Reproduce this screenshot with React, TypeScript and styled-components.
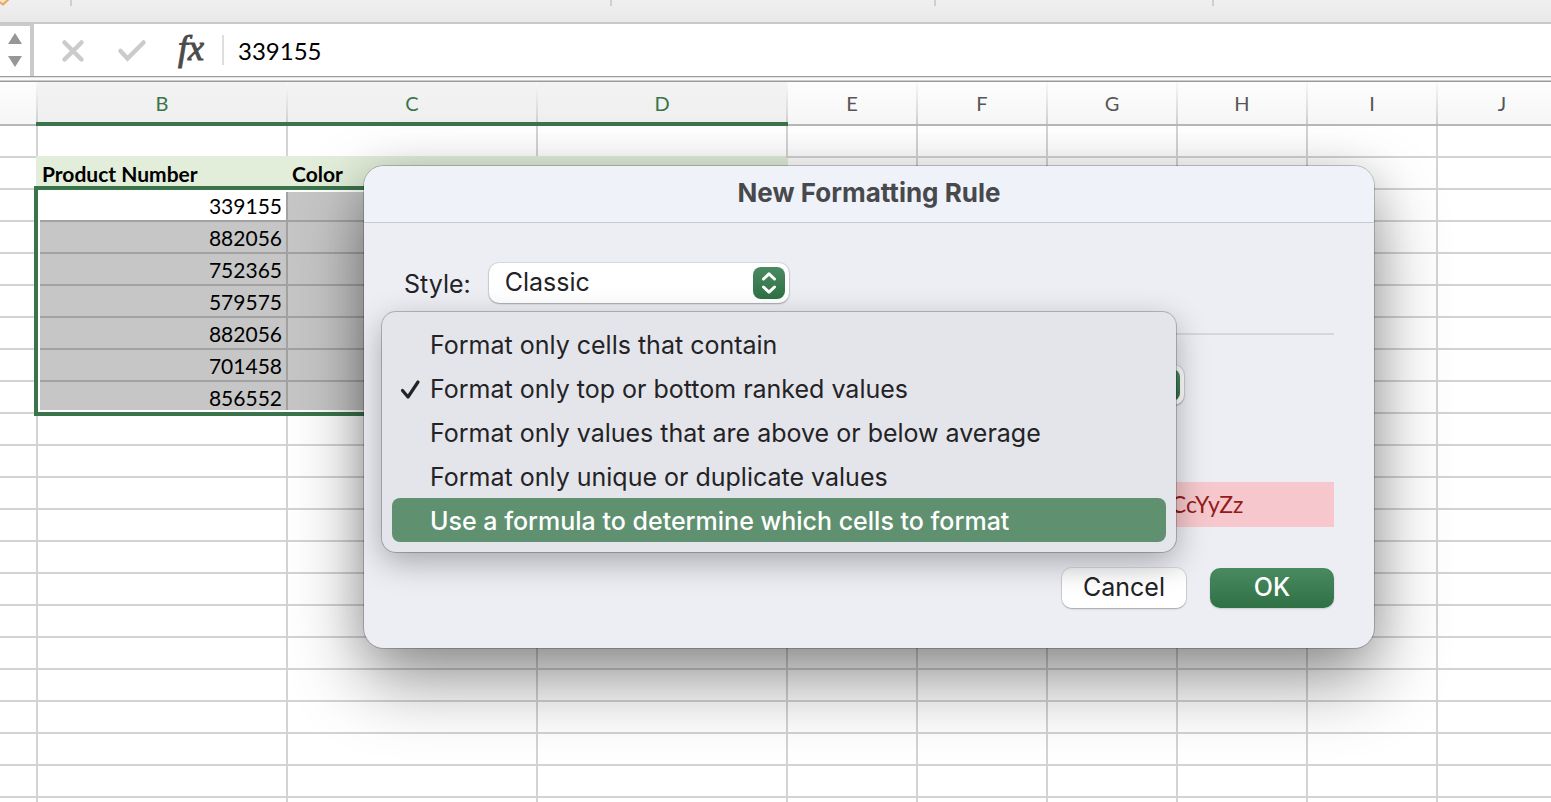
import React from "react";
import styled, { createGlobalStyle, css } from "styled-components";

const GREEN = "#39744a";
const SHEET_FONT = `Lato, "Liberation Sans", sans-serif`;
const UI_FONT = `Inter, "Liberation Sans", sans-serif`;

const GlobalStyle = createGlobalStyle`
  * { box-sizing: border-box; }
  body { margin: 0; background: #fff; }
  button, input, select { font: inherit; color: inherit; margin: 0; }
`;

const Workbook = styled.main`
  position: relative;
  height: 100vh;
  overflow: hidden;
  background: #fff;
  font-family: ${SHEET_FONT};
`;

/* ---------- ribbon ---------- */
const Ribbon = styled.div`
  display: flex;
  height: 24px;
  background: linear-gradient(#efefef, #e9e9e9);
  border-bottom: 2px solid #c9c9c9;
`;
const RibbonGroup = styled.div<{ $width: number }>`
  flex: none;
  width: ${(p) => p.$width}px;
  height: 6px;
  border-right: 2px solid #cfcfcf;
  svg { display: block; }
`;

/* ---------- formula bar ---------- */
const FormulaBar = styled.div`
  display: flex;
  align-items: center;
  height: 52px;
  background: #fff;
`;
const Stepper = styled.div`
  display: flex;
  flex-direction: column;
  align-items: center;
  justify-content: center;
  gap: 12px;
  align-self: stretch;
  width: 34px;
  padding-bottom: 2px;
  border-right: 4px solid #cacaca;
  border-top: 2px solid #cacaca;
`;
const IconButton = styled.button`
  display: flex;
  padding: 0;
  border: 0;
  background: none;
  svg { display: block; }
`;
const Actions = styled.div`
  display: flex;
  align-items: center;
  gap: 30px;
  padding: 2px 18px 0 26px;
`;
const FxButton = styled(IconButton)`
  padding-bottom: 6px;
  font-family: "Liberation Serif", serif;
  font-style: italic;
  font-size: 36px;
  line-height: 36px;
  color: #4b4b4b;
  -webkit-text-stroke: 1px #4b4b4b;
`;
const FormulaInput = styled.input`
  flex: 1;
  min-width: 0;
  height: 30px;
  padding: 0 0 0 14px;
  border: 0;
  border-left: 2px solid #dedede;
  outline: 0;
  background: transparent;
  font-size: 24px;
  color: #000;
`;
const Splitter = styled.div`
  height: 6px;
  border-top: 1px solid #9a9c9a;
  border-bottom: 1px solid #9a9c9a;
  background: linear-gradient(#e4e4e4 0 1px, #fafafa 1px 3px, #cbcbcb 3px 4px);
`;

/* ---------- sheet ---------- */
const Sheet = styled.table`
  width: 100%;
  min-width: 1568px;
  table-layout: fixed;
  border-collapse: separate;
  border-spacing: 0;
  font-size: 21px;
`;
const Col = styled.col<{ $width?: number }>`
  ${(p) => p.$width && `width: ${p.$width}px;`}
`;
const ColumnHead = styled.th<{ $selected?: boolean }>`
  position: relative;
  height: 44px;
  padding: 0 2px 0 0;
  font-size: 20px;
  font-weight: 400;
  color: #565656;
  background: linear-gradient(#fdfdfd, #f6f6f6);
  border-bottom: 2px solid #b8b8b8;
  &::after {
    content: "";
    position: absolute;
    top: 0;
    right: 0;
    bottom: 0;
    width: 2px;
    background: linear-gradient(#f8f8f8, #cfcfcf);
  }
  ${(p) =>
    p.$selected &&
    css`
      color: ${GREEN};
      background: linear-gradient(#f3f3f3, #efefef);
      &::before {
        content: "";
        position: absolute;
        z-index: 1;
        left: -2px;
        right: 0;
        bottom: -2px;
        height: 4px;
        background: ${GREEN};
      }
    `}
`;
const Cell = styled.td<{ $kind?: "title" | "active" | "range" }>`
  position: relative;
  height: 32px;
  padding: 2px 4px 0;
  line-height: 28px;
  text-align: right;
  white-space: nowrap;
  border-right: 2px solid #d3d3d3;
  border-bottom: 2px solid #d3d3d3;
  ${(p) =>
    p.$kind === "title" &&
    css`
      text-align: left;
      font-weight: 700;
      background: #e2eeda;
      border-color: #e2eeda;
      box-shadow: -2px -2px 0 #e2eeda;
    `}
  ${(p) => (p.$kind === "range" || p.$kind === "active") && css`border-color: #a2a2a2;`}
  ${(p) => p.$kind === "range" && css`background: #c6c6c6;`}
`;
const SelectionFrame = styled.div`
  position: absolute;
  z-index: 2;
  top: -4px;
  left: -4px;
  width: 756px;
  height: 230px;
  border: 4px solid ${GREEN};
  box-shadow: inset 0 0 0 2px #fff;
  pointer-events: none;
`;

/* ---------- dialog ---------- */
const Dialog = styled.section`
  position: absolute;
  z-index: 5;
  top: 166px;
  left: 364px;
  width: 1010px;
  border-radius: 20px;
  background: #edeef4;
  font-family: ${UI_FONT};
  font-size: 25px;
  color: #232325;
  box-shadow: 0 0 0 1px rgba(0, 0, 0, 0.2), 0 32px 72px rgba(0, 0, 0, 0.42), 0 4px 40px rgba(0, 0, 0, 0.12);
`;
const DialogTitle = styled.h1`
  margin: 0;
  height: 57px;
  line-height: 54px;
  border-bottom: 1px solid #c8c9cf;
  border-radius: 20px 20px 0 0;
  background: #f0f2fa;
  text-align: center;
  font-size: 26px;
  font-weight: 700;
  color: #48494c;
`;
const DialogBody = styled.form`
  display: flex;
  flex-direction: column;
  padding: 40px;
`;
const Field = styled.div`
  display: flex;
  align-items: center;
  gap: 18px;
  label { padding-top: 2px; }
`;
const SelectBox = styled.div<{ $width: number }>`
  position: relative;
  width: ${(p) => p.$width}px;
  height: 40px;
  select {
    appearance: none;
    display: block;
    width: 100%;
    height: 40px;
    padding: 0 44px 2px 16px;
    border: 0;
    border-radius: 10px;
    outline: 0;
    background: #fff;
    box-shadow: 0 0 0 1px rgba(0, 0, 0, 0.08), 0 1px 2px rgba(0, 0, 0, 0.25);
  }
`;
const SelectCap = styled.span`
  position: absolute;
  top: 4px;
  right: 4px;
  width: 32px;
  height: 32px;
  border-radius: 8px;
  background: linear-gradient(#4a8a61, #2f7045);
  pointer-events: none;
  svg { display: block; }
`;
const Divider = styled.hr`
  width: 100%;
  height: 2px;
  margin: 30px 0;
  border: 0;
  background: #d6d7dc;
`;
const Preview = styled.output`
  align-self: flex-end;
  width: 308px;
  margin: 77px 0 41px;
  line-height: 45px;
  background: #f6c8cd;
  text-align: center;
  font-family: ${SHEET_FONT};
  font-size: 23px;
  color: #931b18;
`;
const Buttons = styled.div`
  display: flex;
  justify-content: flex-end;
  gap: 24px;
`;
const PushButton = styled.button<{ $primary?: boolean }>`
  width: 124px;
  height: 40px;
  padding: 0 0 2px;
  border: 0;
  border-radius: 10px;
  background: ${(p) => (p.$primary ? "linear-gradient(#4a8a61, #2f7045)" : "linear-gradient(#f8f8f8, #fff 40%)")};
  color: ${(p) => (p.$primary ? "#fff" : "#232325")};
  font-weight: ${(p) => (p.$primary ? 500 : 400)};
  box-shadow: ${(p) =>
    p.$primary ? "0 1px 2px rgba(0,0,0,.15)" : "0 0 0 1px rgba(0,0,0,.08), 0 1px 2px rgba(0,0,0,.25)"};
`;
const Menu = styled.div`
  position: absolute;
  z-index: 3;
  top: -53px;
  left: -22px;
  width: 794px;
  padding: 10px;
  border-radius: 14px;
  background: #e4e5eb;
  box-shadow: 0 0 0 1px rgba(0, 0, 0, 0.22), 0 10px 32px rgba(0, 0, 0, 0.3);
`;
const MenuItem = styled.button<{ $active?: boolean }>`
  display: flex;
  align-items: center;
  width: 100%;
  height: 44px;
  padding: 2px 0 0;
  border: 0;
  border-radius: 8px;
  background: ${(p) => (p.$active ? "#5f9170" : "none")};
  color: ${(p) => (p.$active ? "#fff" : "#232325")};
  font-weight: ${(p) => (p.$active ? 500 : 400)};
  text-align: left;
  white-space: nowrap;
`;
const MenuMark = styled.span`
  width: 38px;
  padding-left: 8px;
  svg { display: block; }
`;

const COLUMNS = ["", "B", "C", "D", "E", "F", "G", "H", "I", "J", ""];
const WIDTHS = [38, 250, 250, 250, 130, 130, 130, 130, 130, 130, undefined];
const NUMBERS = ["339155", "882056", "752365", "579575", "882056", "701458", "856552"];
const RULES = [
  "Format only cells that contain",
  "Format only top or bottom ranked values",
  "Format only values that are above or below average",
  "Format only unique or duplicate values",
  "Use a formula to determine which cells to format",
];
const ROWS = Array.from({ length: 24 }, (_, i) => i);

function cellFor(row: number, col: number) {
  const inTable = col >= 1 && col <= 3;
  if (inTable && row === 1) {
    return <Cell key={col} $kind="title">{["Product Number", "Color", ""][col - 1]}</Cell>;
  }
  if (inTable && row >= 2 && row <= 8) {
    const active = row === 2 && col === 1;
    return (
      <Cell key={col} $kind={active ? "active" : "range"}>
        {col === 1 && NUMBERS[row - 2]}
        {active && <SelectionFrame />}
      </Cell>
    );
  }
  return <Cell key={col} />;
}

const Chevrons = () => (
  <SelectCap>
    <svg width="32" height="32" viewBox="0 0 32 32" fill="none" stroke="#fff" strokeWidth="3" strokeLinecap="round" strokeLinejoin="round">
      <path d="M10.5 12 16 6.8 21.500 12M10.5 20 16 25.200 21.500 20" />
    </svg>
  </SelectCap>
);

export default function App() {
  return (
    <Workbook>
      <GlobalStyle />
      <Ribbon>
        <RibbonGroup $width={72}>
          <svg width="14" height="6" viewBox="0 0 14 6">
            <path d="M-2 1 3 4.500 9-1" fill="#fbe3c4" stroke="#eda35c" strokeWidth="2" />
          </svg>
        </RibbonGroup>
        <RibbonGroup $width={540} />
        <RibbonGroup $width={324} />
        <RibbonGroup $width={278} />
      </Ribbon>

      <FormulaBar>
        <Stepper>
          <IconButton aria-label="Previous">
            <svg width="14" height="11" viewBox="0 0 14 11"><path d="M7 0 14 11H0Z" fill="#979797" /></svg>
          </IconButton>
          <IconButton aria-label="Next">
            <svg width="14" height="11" viewBox="0 0 14 11"><path d="M7 11 14 0H0Z" fill="#979797" /></svg>
          </IconButton>
        </Stepper>
        <Actions>
          <IconButton aria-label="Cancel entry">
            <svg width="26" height="26" viewBox="0 0 26 26" stroke="#cbcbcb" strokeWidth="4.500" strokeLinecap="round">
              <path d="M4.500 4.500 21.500 21.500M21.500 4.500 4.500 21.500" />
            </svg>
          </IconButton>
          <IconButton aria-label="Accept entry">
            <svg width="32" height="26" viewBox="0 0 32 26" fill="none" stroke="#cbcbcb" strokeWidth="4.500" strokeLinecap="round">
              <path d="M4.500 13 11.500 20.500 27.500 4.500" />
            </svg>
          </IconButton>
          <FxButton aria-label="Insert function">fx</FxButton>
        </Actions>
        <FormulaInput aria-label="Formula" defaultValue="339155" />
      </FormulaBar>
      <Splitter />

      <Sheet>
        <colgroup>
          {WIDTHS.map((w, i) => <Col key={i} $width={w} />)}
        </colgroup>
        <thead>
          <tr>
            {COLUMNS.map((c, i) => <ColumnHead key={i} $selected={i >= 1 && i <= 3}>{c}</ColumnHead>)}
          </tr>
        </thead>
        <tbody>
          {ROWS.map((r) => <tr key={r}>{COLUMNS.map((_, c) => cellFor(r, c))}</tr>)}
        </tbody>
      </Sheet>

      <Dialog role="dialog" aria-labelledby="rule-title">
        <DialogTitle id="rule-title">New Formatting Rule</DialogTitle>
        <DialogBody onSubmit={(e) => e.preventDefault()}>
          <Field>
            <label htmlFor="style">Style:</label>
            <SelectBox $width={300}>
              <select id="style"><option>Classic</option></select>
              <Chevrons />
            </SelectBox>
          </Field>
          <Divider />
          <SelectBox $width={780}>
            <select aria-label="Rule type" />
            <Chevrons />
            <Menu role="menu">
              {RULES.map((rule, i) => (
                <MenuItem key={rule} type="button" role="menuitemradio" aria-checked={i === 1} $active={i === 4}>
                  <MenuMark>
                    {i === 1 && (
                      <svg width="22" height="22" viewBox="0 0 22 22" fill="none" stroke="#232325" strokeWidth="3.200" strokeLinecap="round" strokeLinejoin="round">
                        <path d="M2.500 12.500 8 19 18 4" />
                      </svg>
                    )}
                  </MenuMark>
                  {rule}
                </MenuItem>
              ))}
            </Menu>
          </SelectBox>
          <Preview>AaBbCcYyZz</Preview>
          <Buttons>
            <PushButton type="button">Cancel</PushButton>
            <PushButton type="submit" $primary>OK</PushButton>
          </Buttons>
        </DialogBody>
      </Dialog>
    </Workbook>
  );
}
